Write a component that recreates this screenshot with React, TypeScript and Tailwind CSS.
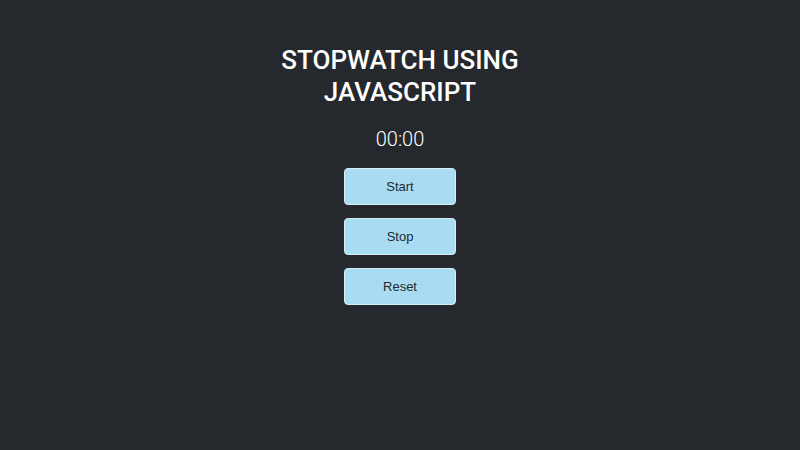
import React, { useEffect, useRef, useState } from 'react';

const pad = (n: number) => String(n).padStart(2, '0');

const App: React.FC = () => {
  const [seconds, setSeconds] = useState(0);
  const timer = useRef<number | null>(null);

  const start = () => {
    if (timer.current !== null) return;
    timer.current = window.setInterval(() => setSeconds((s) => s + 1), 1000);
  };

  const stop = () => {
    if (timer.current !== null) {
      window.clearInterval(timer.current);
      timer.current = null;
    }
  };

  const reset = () => {
    stop();
    setSeconds(0);
  };

  useEffect(() => stop, []);

  const buttonClass =
    'w-[112px] h-[37px] rounded-[4px] border border-[#d4eef8] bg-[#a9dcf2] text-[13px] text-[#1f2a30] font-["Liberation_Sans",Arial,sans-serif] hover:bg-[#93d0ea]';

  return (
    <div className="min-h-[450px] w-full bg-[#25282c] flex flex-col items-center pt-[44px] text-white font-['Roboto',sans-serif]">
      <h1 className="text-[26px] leading-[32px] font-medium text-center">
        STOPWATCH USING
        <br />
        JAVASCRIPT
      </h1>
      <div className="mt-[17px] text-[20px] leading-[28px] font-light">
        {pad(Math.floor(seconds / 60))}:{pad(seconds % 60)}
      </div>
      <div className="mt-[15px] flex flex-col gap-[13px]">
        <button type="button" onClick={start} className={buttonClass}>
          Start
        </button>
        <button type="button" onClick={stop} className={buttonClass}>
          Stop
        </button>
        <button type="button" onClick={reset} className={buttonClass}>
          Reset
        </button>
      </div>
    </div>
  );
};

export default App;
